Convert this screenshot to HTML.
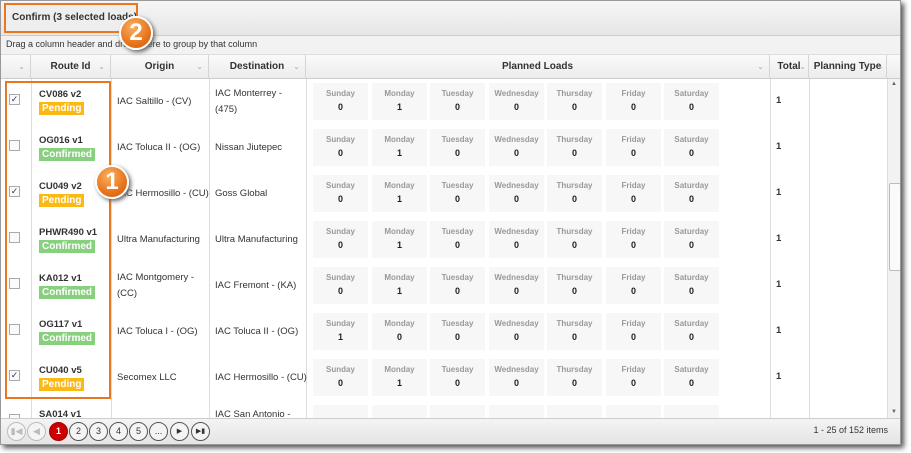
<!DOCTYPE html><html><head><style>
body{margin:0;width:911px;height:453px;background:#fff;font-family:"Liberation Sans",sans-serif;overflow:hidden;position:relative}
.frame{position:absolute;left:0;top:0;width:899px;height:443px;border:1px solid #999;background:#fff;box-shadow:3px 3px 5px #555;overflow:hidden}
.tb{position:absolute;left:0;top:0;width:899px;height:34px;background:linear-gradient(#f6f6f6,#e6e6e6);border-bottom:1px solid #ccc}
.btn{position:absolute;left:3px;top:2px;width:124px;height:26px;border:2px solid #e87722;font-size:10px;font-weight:bold;color:#333;line-height:26px;padding-left:6px;box-sizing:content-box;background:#eee;white-space:nowrap;overflow:hidden}
.grp{position:absolute;left:0;top:35px;width:899px;height:18px;background:#f2f2f2;font-size:9px;color:#333;line-height:17px;padding-left:5px;border-bottom:1px solid #ddd}
.hd{position:absolute;top:54px;height:24px;background:linear-gradient(#fafafa,#ececec);border-bottom:1px solid #ccc;border-right:1px solid #d5d5d5;box-sizing:border-box;font-size:10px;font-weight:bold;color:#333;text-align:center;line-height:23px}
.ar{position:absolute;right:5px;top:0;color:#aaa;font-weight:normal;font-size:8px}
.col{position:absolute;top:78px;height:339px;border-right:1px solid #ddd}
.r{position:absolute;left:0;width:886px;height:46px;font-size:9.5px;color:#333}
.cb{position:absolute;left:8px;width:9px;height:9px;border:1px solid #aaa;background:#fafafa;font-size:9px;line-height:9px;text-align:center;color:#336}
.id{position:absolute;left:38px;font-weight:bold;font-size:9.5px}
.tag{position:absolute;left:38px;color:#fff;font-weight:bold;font-size:10px;padding:0 3px;line-height:13px}
.p{background:#fdb913}.c{background:#86d07e}
.t{position:absolute;line-height:16px}
.d{position:absolute;top:4px;width:55px;height:37px;background:#f7f7f7;text-align:center;font-size:8px;color:#999;font-weight:bold}
.d b{display:block;color:#222;font-size:9px;margin-top:4px}
.d span{display:block;margin-top:6px}
.pg{position:absolute;top:421px;width:17px;height:17px;border:1px solid #555;border-radius:50%;font-size:9px;text-align:center;line-height:17px;color:#333;background:#f4f4f4}
</style></head><body><div class="frame">
<div class="tb"><div class="btn">Confirm (3 selected loads)</div></div>
<div class="grp">Drag a column header and drop it here to group by that column</div>
<div class="hd" style="left:0;width:30px"><span class="ar">&#8964;</span></div>
<div class="hd" style="left:30px;width:80px">Route Id<span class="ar">&#8964;</span></div>
<div class="hd" style="left:110px;width:98px">Origin<span class="ar">&#8964;</span></div>
<div class="hd" style="left:208px;width:97px">Destination<span class="ar">&#8964;</span></div>
<div class="hd" style="left:305px;width:464px">Planned Loads<span class="ar">&#8964;</span></div>
<div class="hd" style="left:769px;width:39px">Total<span class="ar" style="right:2px">&#8964;</span></div>
<div class="hd" style="left:808px;width:78px">Planning Type<span class="ar" style="right:2px">&#8964;</span></div>
<div class="hd" style="left:886px;width:13px;border-right:0"></div>
<div class="col" style="left:0;width:30px"></div><div class="col" style="left:30px;width:80px"></div><div class="col" style="left:110px;width:98px"></div><div class="col" style="left:208px;width:97px"></div><div class="col" style="left:305px;width:464px;border-right:1px solid #ddd"></div><div class="col" style="left:769px;width:39px"></div><div class="col" style="left:808px;width:78px"></div>
<div style="position:absolute;left:886px;top:78px;width:13px;height:339px;background:#f2f2f2;border-left:1px solid #ddd"><div style="position:absolute;left:1px;top:104px;width:10px;height:86px;background:#fafafa;border:1px solid #bbb;border-radius:2px"></div><div style="position:absolute;left:3px;top:2px;font-size:6px;color:#666">&#9650;</div><div style="position:absolute;left:3px;bottom:3px;font-size:6px;color:#666">&#9660;</div></div>

<div class="r" style="top:78px"><div class="cb" style="top:15px">&#10003;</div><div class="id" style="top:10px">CV086 v2</div><div class="tag p" style="top:23px">Pending</div><div class="t" style="left:116px;top:15px">IAC Saltillo - (CV)</div><div class="t" style="left:214px;top:7px">IAC Monterrey -<br>(475)</div>
<div class="d" style="left:312px"><span>Sunday</span><b>0</b></div><div class="d" style="left:371px"><span>Monday</span><b>1</b></div><div class="d" style="left:429px"><span>Tuesday</span><b>0</b></div><div class="d" style="left:488px"><span>Wednesday</span><b>0</b></div><div class="d" style="left:546px"><span>Thursday</span><b>0</b></div><div class="d" style="left:605px"><span>Friday</span><b>0</b></div><div class="d" style="left:663px"><span>Saturday</span><b>0</b></div><div class="t" style="left:775px;top:14px;font-weight:bold">1</div></div>

<div class="r" style="top:124px"><div class="cb" style="top:15px"></div><div class="id" style="top:10px">OG016 v1</div><div class="tag c" style="top:23px">Confirmed</div><div class="t" style="left:116px;top:15px">IAC Toluca II - (OG)</div><div class="t" style="left:214px;top:15px">Nissan Jiutepec</div>
<div class="d" style="left:312px"><span>Sunday</span><b>0</b></div><div class="d" style="left:371px"><span>Monday</span><b>1</b></div><div class="d" style="left:429px"><span>Tuesday</span><b>0</b></div><div class="d" style="left:488px"><span>Wednesday</span><b>0</b></div><div class="d" style="left:546px"><span>Thursday</span><b>0</b></div><div class="d" style="left:605px"><span>Friday</span><b>0</b></div><div class="d" style="left:663px"><span>Saturday</span><b>0</b></div><div class="t" style="left:775px;top:14px;font-weight:bold">1</div></div>

<div class="r" style="top:170px"><div class="cb" style="top:15px">&#10003;</div><div class="id" style="top:10px">CU049 v2</div><div class="tag p" style="top:23px">Pending</div><div class="t" style="left:116px;top:15px">IAC Hermosillo - (CU)</div><div class="t" style="left:214px;top:15px">Goss Global</div>
<div class="d" style="left:312px"><span>Sunday</span><b>0</b></div><div class="d" style="left:371px"><span>Monday</span><b>1</b></div><div class="d" style="left:429px"><span>Tuesday</span><b>0</b></div><div class="d" style="left:488px"><span>Wednesday</span><b>0</b></div><div class="d" style="left:546px"><span>Thursday</span><b>0</b></div><div class="d" style="left:605px"><span>Friday</span><b>0</b></div><div class="d" style="left:663px"><span>Saturday</span><b>0</b></div><div class="t" style="left:775px;top:14px;font-weight:bold">1</div></div>

<div class="r" style="top:216px"><div class="cb" style="top:15px"></div><div class="id" style="top:10px">PHWR490 v1</div><div class="tag c" style="top:23px">Confirmed</div><div class="t" style="left:116px;top:15px">Ultra Manufacturing</div><div class="t" style="left:214px;top:15px">Ultra Manufacturing</div>
<div class="d" style="left:312px"><span>Sunday</span><b>0</b></div><div class="d" style="left:371px"><span>Monday</span><b>1</b></div><div class="d" style="left:429px"><span>Tuesday</span><b>0</b></div><div class="d" style="left:488px"><span>Wednesday</span><b>0</b></div><div class="d" style="left:546px"><span>Thursday</span><b>0</b></div><div class="d" style="left:605px"><span>Friday</span><b>0</b></div><div class="d" style="left:663px"><span>Saturday</span><b>0</b></div><div class="t" style="left:775px;top:14px;font-weight:bold">1</div></div>

<div class="r" style="top:262px"><div class="cb" style="top:15px"></div><div class="id" style="top:10px">KA012 v1</div><div class="tag c" style="top:23px">Confirmed</div><div class="t" style="left:116px;top:7px">IAC Montgomery -<br>(CC)</div><div class="t" style="left:214px;top:15px">IAC Fremont - (KA)</div>
<div class="d" style="left:312px"><span>Sunday</span><b>0</b></div><div class="d" style="left:371px"><span>Monday</span><b>1</b></div><div class="d" style="left:429px"><span>Tuesday</span><b>0</b></div><div class="d" style="left:488px"><span>Wednesday</span><b>0</b></div><div class="d" style="left:546px"><span>Thursday</span><b>0</b></div><div class="d" style="left:605px"><span>Friday</span><b>0</b></div><div class="d" style="left:663px"><span>Saturday</span><b>0</b></div><div class="t" style="left:775px;top:14px;font-weight:bold">1</div></div>

<div class="r" style="top:308px"><div class="cb" style="top:15px"></div><div class="id" style="top:10px">OG117 v1</div><div class="tag c" style="top:23px">Confirmed</div><div class="t" style="left:116px;top:15px">IAC Toluca I - (OG)</div><div class="t" style="left:214px;top:15px">IAC Toluca II - (OG)</div>
<div class="d" style="left:312px"><span>Sunday</span><b>1</b></div><div class="d" style="left:371px"><span>Monday</span><b>0</b></div><div class="d" style="left:429px"><span>Tuesday</span><b>0</b></div><div class="d" style="left:488px"><span>Wednesday</span><b>0</b></div><div class="d" style="left:546px"><span>Thursday</span><b>0</b></div><div class="d" style="left:605px"><span>Friday</span><b>0</b></div><div class="d" style="left:663px"><span>Saturday</span><b>0</b></div><div class="t" style="left:775px;top:14px;font-weight:bold">1</div></div>

<div class="r" style="top:354px"><div class="cb" style="top:15px">&#10003;</div><div class="id" style="top:10px">CU040 v5</div><div class="tag p" style="top:23px">Pending</div><div class="t" style="left:116px;top:15px">Secomex LLC</div><div class="t" style="left:214px;top:15px">IAC Hermosillo - (CU)</div>
<div class="d" style="left:312px"><span>Sunday</span><b>0</b></div><div class="d" style="left:371px"><span>Monday</span><b>1</b></div><div class="d" style="left:429px"><span>Tuesday</span><b>0</b></div><div class="d" style="left:488px"><span>Wednesday</span><b>0</b></div><div class="d" style="left:546px"><span>Thursday</span><b>0</b></div><div class="d" style="left:605px"><span>Friday</span><b>0</b></div><div class="d" style="left:663px"><span>Saturday</span><b>0</b></div><div class="t" style="left:775px;top:14px;font-weight:bold">1</div></div>

<div class="r" style="top:400px"><div class="cb" style="top:13px"></div><div class="id" style="top:8px">SA014 v1</div><div class="t" style="left:214px;top:6px">IAC San Antonio -</div><div class="d" style="left:312px"></div><div class="d" style="left:371px"></div><div class="d" style="left:429px"></div><div class="d" style="left:488px"></div><div class="d" style="left:546px"></div><div class="d" style="left:605px"></div><div class="d" style="left:663px"></div></div>

<div style="position:absolute;left:4px;top:80px;width:102px;height:314px;border:2px solid #e87722"></div>

<div style="position:absolute;left:0;top:417px;width:899px;height:26px;background:linear-gradient(#f4f4f4,#e4e4e4);border-top:1px solid #ccc"></div>
<div class="pg" style="left:6px;color:#bbb;border-color:#bbb">&#9646;&#9664;</div>
<div class="pg" style="left:26px;color:#bbb;border-color:#bbb">&#9664;</div>
<div class="pg" style="left:48px;background:#c00;border-color:#a00;color:#fff;font-weight:bold">1</div>
<div class="pg" style="left:68px">2</div><div class="pg" style="left:88px">3</div><div class="pg" style="left:108px">4</div><div class="pg" style="left:128px">5</div>
<div class="pg" style="left:148px">...</div><div class="pg" style="left:169px;font-size:7px">&#9654;</div><div class="pg" style="left:190px;font-size:7px">&#9654;&#9646;</div>
<div style="position:absolute;right:12px;top:424px;font-size:9px;color:#333">1 - 25 of 152 items</div>
</div>
<div style="position:absolute;left:119px;top:16px;width:30px;height:30px;border-radius:50%;background:radial-gradient(circle at 40% 30%,#f8b062,#e8741c 60%,#c65a0c);border:2px solid #fff;box-shadow:2px 2px 4px #666;color:#fff;font-weight:bold;font-size:24px;text-align:center;line-height:30px">2</div>
<div style="position:absolute;left:95px;top:165px;width:30px;height:30px;border-radius:50%;background:radial-gradient(circle at 40% 30%,#f8b062,#e8741c 60%,#c65a0c);border:2px solid #fff;box-shadow:2px 2px 4px #666;color:#fff;font-weight:bold;font-size:24px;text-align:center;line-height:30px">1</div>
</body></html>
